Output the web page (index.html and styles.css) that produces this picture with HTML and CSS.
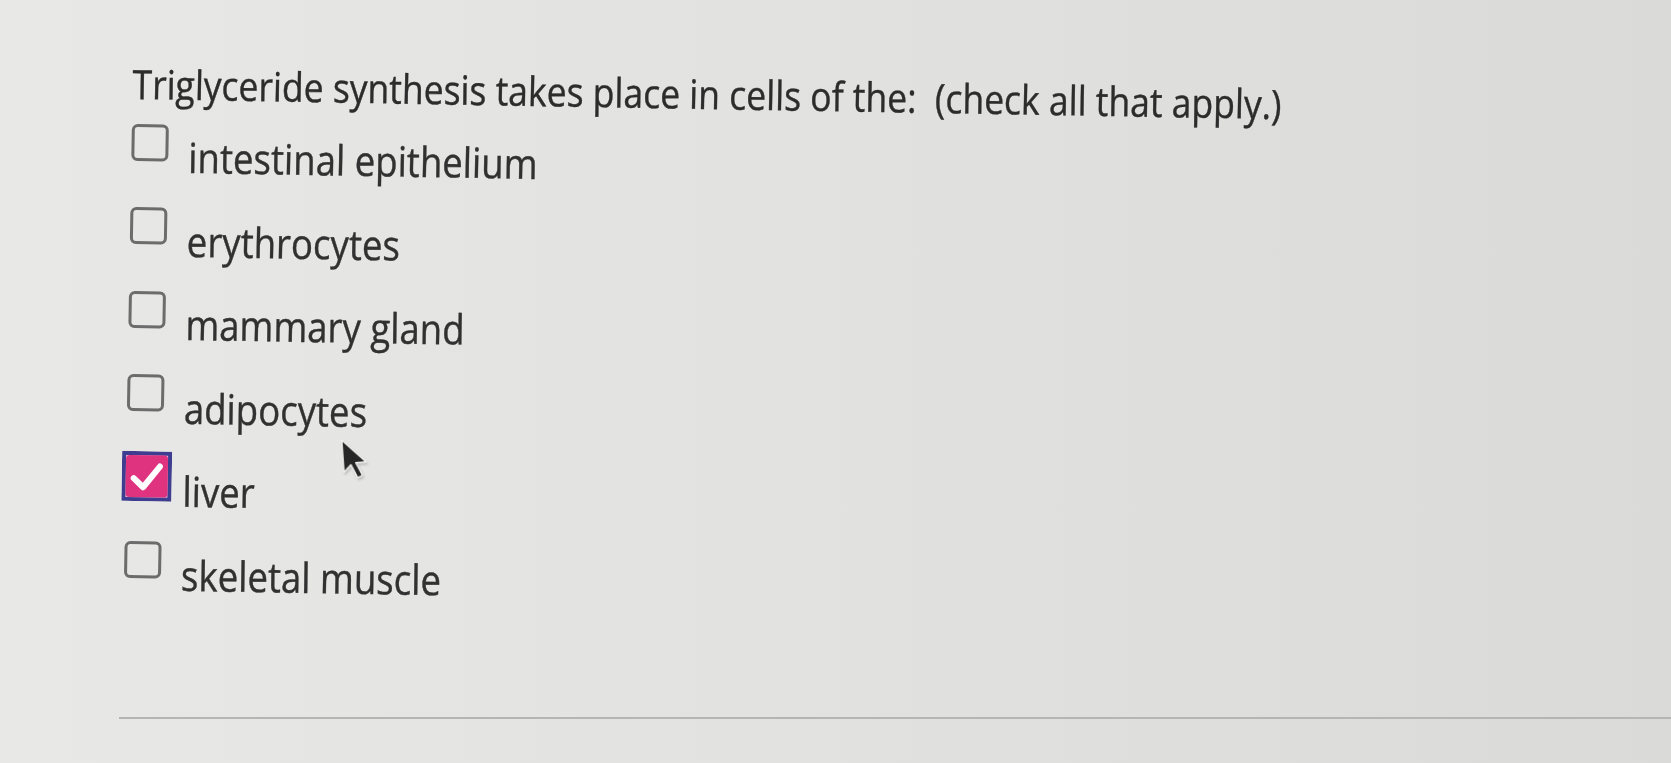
FILE: index.html
```html
<!DOCTYPE html>
<html lang="en">
<head>
    <meta charset="UTF-8">
    <meta name="viewport" content="width=device-width, initial-scale=1.0">
    <title>Question</title>

    <link rel="stylesheet" href="styles.css">

</head>


<body>


    <section class="page">

        <div class="question">

            <div class="question-title"><span>Triglyceride synthesis takes place in cells of the:&nbsp; (check all that apply.)</span></div>

            <div class="options">

                <!-- ITEM -->
                <label class="option">
                    <input type="checkbox">
                    <span class="box"></span>
                    <span class="option-text">intestinal epithelium</span>
                </label>

                <!-- ITEM -->
                <label class="option">
                    <input type="checkbox">
                    <span class="box"></span>
                    <span class="option-text">erythrocytes</span>
                </label>

                <!-- ITEM -->
                <label class="option">
                    <input type="checkbox">
                    <span class="box"></span>
                    <span class="option-text">mammary gland</span>
                </label>

                <!-- ITEM -->
                <label class="option">
                    <input type="checkbox">
                    <span class="box"></span>
                    <span class="option-text">adipocytes</span>
                </label>

                <!-- ITEM -->
                <label class="option">
                    <input type="checkbox" checked>
                    <span class="box">
                        <svg class="tick" viewBox="0 0 50 50" width="50" height="50">
                            <rect x="0" y="0" width="50" height="50" fill="#3f3d8f"/>
                            <rect x="4" y="4" width="42" height="42" fill="#e7b9d8"/>
                            <rect x="4" y="4" width="42" height="42" rx="4" fill="#e0337f"/>
                            <path d="M12 27 L21.5 36 L38 15" fill="none" stroke="#fff" stroke-width="6" stroke-linecap="round" stroke-linejoin="round"/>
                        </svg>
                    </span>
                    <span class="option-text">liver</span>
                </label>

                <!-- ITEM -->
                <label class="option">
                    <input type="checkbox">
                    <span class="box"></span>
                    <span class="option-text">skeletal muscle</span>
                </label>

            </div>

        </div>

        <hr class="rule">

    </section>


    <!-- mouse pointer -->
    <svg class="pointer" viewBox="0 0 13 21" width="27" height="44">
        <path d="M1 1 L1 16.5 L4.6 13.2 L7.4 19.6 L9.8 18.6 L7 12.3 L12 12.3 Z" fill="#262626" stroke="#f2f2f2" stroke-width="0.7" stroke-linejoin="round"/>
    </svg>

</body>
</html>
```

FILE: styles.css
```css
*{
    margin: 0;
    padding: 0;
    box-sizing: border-box;
}


body{
    font-family: "Open Sans", "Noto Sans", Arial, sans-serif;
    color: #313131;
    background: linear-gradient(90deg, #e8e8e6 0%, #e2e2e0 45%, #dadad8 100%);
    width: 1671px;
    height: 763px;
    overflow: hidden;
}


.page{
    padding-top: 61px;
}


/* the whole question sits slightly tilted */
.question{
    margin-left: 133px;
    transform: rotate(1deg);
    transform-origin: 0 0;
}

.question-title{
    font-size: 35.5px;
    line-height: 48px;
    color: #2c2c2c;
    white-space: nowrap;
}

/* glyphs are drawn a bit taller than the font's own proportions */
.question-title span,
.option-text{
    display: inline-block;
    transform: scaleY(1.14);
    transform-origin: 50% 79%;
    -webkit-text-stroke: 0.35px currentColor;
}


.options{
    display: flex;
    flex-direction: column;
    gap: 33.5px;
    margin-top: 24px;
}


.option{
    display: flex;
    align-items: flex-start;
    gap: 20px;
    user-select: none;
}

.option input{
    display: none;
}

.box{
    flex: none;
    width: 37px;
    height: 37px;
    margin-top: -9.5px;
    border: 3px solid #6c6c6c;
    border-radius: 6px;
}

.tick{
    display: none;
}

.option input:checked ~ .box{
    width: 50px;
    height: 50px;
    margin: -16px -8.5px 0 -4.5px;
    border: none;
    border-radius: 0;
}

.option input:checked ~ .box .tick{
    display: block;
}

.option-text{
    font-size: 36.6px;
    line-height: 50px;
    white-space: nowrap;
}


.rule{
    border: none;
    height: 2px;
    background-color: #b5b5b5;
    margin: 116px 0 0 119px;
}


.pointer{
    position: absolute;
    left: 341px;
    top: 437px;
    transform: rotate(-4deg);
    filter: drop-shadow(1px 2px 1px rgba(0, 0, 0, 0.18));
}
```
